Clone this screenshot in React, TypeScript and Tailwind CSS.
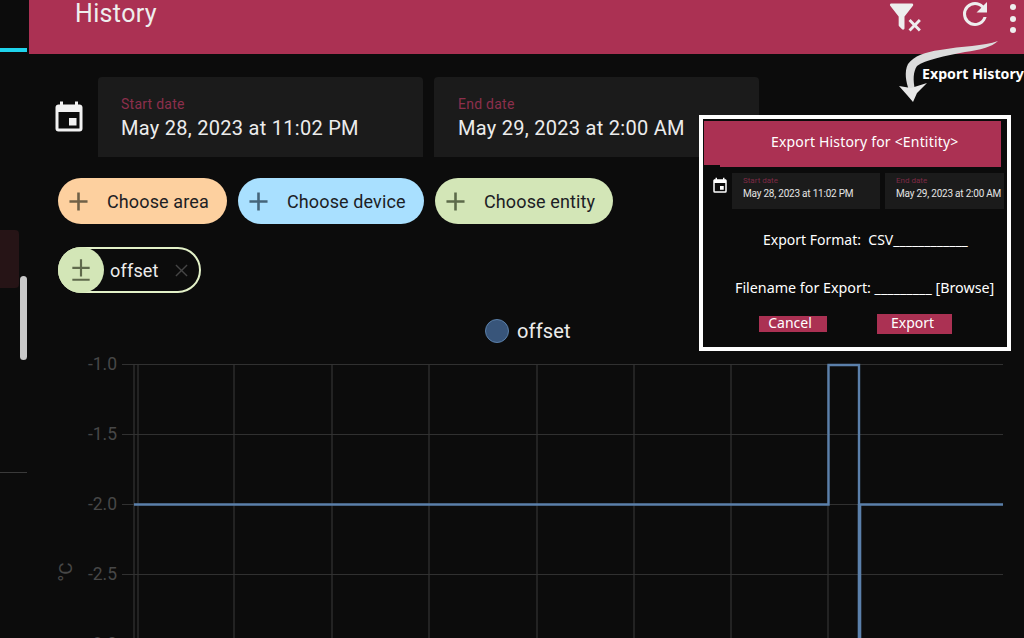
const CALENDAR = "M19,19H5V8H19M16,1V3H8V1H6V3H5C3.89,3 3,3.89 3,5V19A2,2 0 0,0 5,21H19A2,2 0 0,0 21,19V5C21,3.89 20.1,3 19,3H18V1M17,12H12V17H17V12Z";
const PLUS = "M19,13H13V19H11V13H5V11H11V5H13V11H19V13Z";
const FILTER_REMOVE =
  "M14.76,20.83L17.6,18L14.76,15.17L16.17,13.76L19,16.57L21.83,13.76L23.24,15.17L20.43,18L23.24,20.83L21.83,22.24L19,19.4L16.17,22.24L14.76,20.83M12,12V19.88C12.04,20.18 11.94,20.5 11.71,20.71C11.32,21.1 10.69,21.1 10.3,20.71L8.29,18.7C8.06,18.47 7.96,18.16 8,17.87V12H7.97L2.21,4.62C1.87,4.19 1.95,3.56 2.38,3.22C2.57,3.08 2.78,3 3,3V3H17V3C17.22,3 17.43,3.08 17.62,3.22C18.05,3.56 18.13,4.19 17.79,4.62L12.03,12H12Z";
const REFRESH =
  "M17.65,6.35C16.2,4.9 14.21,4 12,4A8,8 0 0,0 4,12A8,8 0 0,0 12,20C15.73,20 18.84,17.45 19.73,14H17.65C16.83,16.33 14.61,18 12,18A6,6 0 0,1 6,12A6,6 0 0,1 12,6C13.66,6 15.14,6.69 16.22,7.78L13,11H20V4L17.65,6.35Z";

function Icon({ d, className }: { d: string; className: string }) {
  return (
    <svg viewBox="0 0 24 24" fill="currentColor" className={className}>
      <path d={d} />
    </svg>
  );
}

function DateField({ label, value, className }: { label: string; value: string; className: string }) {
  return (
    <div className={`h-[80px] rounded-t bg-[#1b1b1b] pt-[18px] ${className}`}>
      <div className="text-[14px] leading-[18px] tracking-[0.25px] text-[#8c2f4c]">{label}</div>
      <div className="text-[20px] leading-[30px] tracking-[0.28px] text-[#ececec]">{value}</div>
    </div>
  );
}

function AddChip({ label, className, bg, plus }: { label: string; className: string; bg: string; plus: string }) {
  return (
    <div className={`flex h-[46px] items-center rounded-full pl-[5px] ${className} ${bg}`}>
      <Icon d={PLUS} className={`h-[31px] w-[31px] ${plus}`} />
      <span className="ml-[13px] text-[18px] tracking-[0.12px] text-[#1c2024]">{label}</span>
    </div>
  );
}

function MiniField({ label, value, className }: { label: string; value: string; className: string }) {
  return (
    <div className={`h-[36px] bg-[#1b1b1b] pt-[3px] ${className}`}>
      <div className="text-[8px] leading-[10px] text-[#7e2a45]">{label}</div>
      <div className="mt-[1px] text-[10px] leading-[13px] tracking-[-0.22px] text-[#e4e4e4]">{value}</div>
    </div>
  );
}

function Chart() {
  const rows = [
    { y: 364.5, label: "-1.0" },
    { y: 434.5, label: "-1.5" },
    { y: 504.5, label: "-2.0" },
    { y: 574.5, label: "-2.5" },
    { y: 644.5, label: "-3.0" },
  ];
  const cols = [134, 138, 234, 332, 429, 537, 634, 731, 828];
  return (
    <svg viewBox="29 350 995 288" className="mt-[7px] block h-[288px] w-[995px]">
      {rows.map((r) => (
        <g key={r.y}>
          <line x1="122" x2="1003" y1={r.y} y2={r.y} stroke="#313131" strokeWidth="1.2" />
          <text x="117" y={r.y + 5.5} textAnchor="end" fill="#474747" fontSize="17.5" fontFamily="Roboto, sans-serif">
            {r.label}
          </text>
        </g>
      ))}
      {cols.map((x) => (
        <line key={x} x1={x} x2={x} y1="364" y2="638" stroke="#343434" strokeWidth="1.2" />
      ))}
      <text
        x="67"
        y="572"
        textAnchor="middle"
        fill="#474747"
        fontSize="19"
        fontFamily="Roboto, sans-serif"
        transform="rotate(-90 67 572)"
        dominantBaseline="middle"
      >
        °C
      </text>
      <path d="M134 504.5H828.5V365H859V504.5M860 504.5H1003" fill="none" stroke="#5b80ab" strokeWidth="2.4" />
      <path d="M859.5 504V638" fill="none" stroke="#5b80ab" strokeWidth="3.6" />
    </svg>
  );
}

function ExportDialog() {
  return (
    <div className="absolute left-[699px] top-[115px] h-[236px] w-[312px] border-[4px] border-white bg-[#0b0b0b] font-['Noto_Sans',sans-serif] text-white">
      <div className="relative ml-[1px] mt-[2px] h-[46px] w-[297px] bg-[#ab3153] pl-[67px] pt-[11px] text-[14px] leading-[20px]">
        <span className="tracking-[0.18px]">Export History for &lt;Entitity&gt;</span>
        <div className="absolute bottom-0 left-0 h-[2px] w-[16px] bg-[#0b0b0b]" />
      </div>
      <div className="mt-[6px] flex items-start font-['Roboto',sans-serif]">
        <Icon d={CALENDAR} className="ml-[8px] mt-[4px] h-[18px] w-[18px] text-white" />
        <MiniField label="Start date" value="May 28, 2023 at 11:02 PM" className="ml-[3px] w-[148px] pl-[11px]" />
        <MiniField label="End date" value="May 29, 2023 at 2:00 AM" className="ml-[5px] w-[119px] pl-[11px]" />
      </div>
      <div className="mt-[21px] whitespace-nowrap pl-[60px] text-[14px] leading-[20px]">
        Export Format:&nbsp; CSV____________
      </div>
      <div className="mt-[28px] whitespace-nowrap pl-[32px] text-[14.3px] leading-[20px]">
        Filename for Export: _________ [Browse]
      </div>
      <div className="mt-[16px] flex items-center text-[14px]">
        <button className="ml-[56px] flex h-[16px] w-[68px] items-center justify-center bg-[#ab3153] pb-[4px] pr-[6px]">Cancel</button>
        <button className="ml-[50px] flex h-[20px] w-[75px] items-center justify-center bg-[#ab3153] pb-[3px] pr-[4px]">Export</button>
      </div>
    </div>
  );
}

export default function App() {
  return (
    <div className="relative flex h-[638px] w-[1024px] overflow-hidden bg-[#0c0c0c] font-['Roboto',sans-serif]">
      <aside className="relative flex w-[29px] shrink-0 flex-col">
        <div className="mt-[48px] h-[4px] w-[27px] bg-[#1fd4ec]" />
        <div className="mt-[178px] h-[58px] w-[19px] rounded-r-sm bg-[#261416]" />
        <div className="mt-[184px] h-px w-[27px] bg-[#3a3a3a]" />
        <div className="absolute left-[20px] top-[276px] h-[84px] w-[7px] rounded-full bg-[#c9c9c9]" />
      </aside>

      <main className="flex w-[995px] flex-col">
        <header className="flex h-[54px] shrink-0 items-start bg-[#ab3153] text-[#eeeeee]">
          <h1 className="ml-[46px] mt-[1px] text-[25px] leading-[26px] tracking-[0.35px] font-normal">History</h1>
          <Icon d={FILTER_REMOVE} className="ml-auto mt-[-1px] h-[35px] w-[35px]" />
          <Icon d={REFRESH} className="ml-[35px] mt-[-4px] h-[36px] w-[36px]" />
          <div className="ml-[17px] mr-[8px] mt-[4px] flex flex-col gap-[5.5px]">
            <span className="h-[6px] w-[6px] rounded-full bg-[#eeeeee]" />
            <span className="h-[6px] w-[6px] rounded-full bg-[#eeeeee]" />
            <span className="h-[6px] w-[6px] rounded-full bg-[#eeeeee]" />
          </div>
        </header>

        <div className="mt-[23px] flex items-start pl-[22px]">
          <Icon d={CALENDAR} className="mt-[23px] h-[36px] w-[36px] text-[#f2f2f2]" />
          <DateField label="Start date" value="May 28, 2023 at 11:02 PM" className="ml-[11px] w-[325px] pl-[23px]" />
          <DateField label="End date" value="May 29, 2023 at 2:00 AM" className="ml-[11px] w-[325px] pl-[24px]" />
        </div>

        <div className="ml-[29px] mt-[21px] flex gap-[11px]">
          <AddChip label="Choose area" className="w-[169px]" bg="bg-[#fdd09f]" plus="text-[#6f6047]" />
          <AddChip label="Choose device" className="w-[186px]" bg="bg-[#a9e0ff]" plus="text-[#45647a]" />
          <AddChip label="Choose entity" className="w-[178px]" bg="bg-[#d3e6b7]" plus="text-[#5c6a4a]" />
        </div>

        <div className="ml-[29px] mt-[23px] flex h-[46px] w-[143px] items-center rounded-full border-[2px] border-[#e3f1c8]">
          <div className="ml-[-2px] flex h-[46px] w-[46px] items-center justify-center rounded-full bg-[#d3e6b7] text-[#5f6a4c]">
            <svg viewBox="0 0 24 24" fill="currentColor" className="h-[26px] w-[26px]">
              <path d="M11 2h2v7h7v2h-7v7h-2v-7H4V9h7V2zM4 20h16v2H4z" />
            </svg>
          </div>
          <span className="ml-[6px] text-[18px] tracking-[0.2px] text-[#ececec]">offset</span>
          <svg viewBox="0 0 14 14" className="ml-[16px] h-[13px] w-[13px]" stroke="#454545" strokeWidth="1.5">
            <path d="M1 1l12 12M13 1L1 13" />
          </svg>
        </div>

        <div className="ml-[456px] mt-[26px] flex h-[24px] items-center">
          <span className="h-[24px] w-[24px] rounded-full border-[1.5px] border-[#5a7fa8] bg-[#38557a]" />
          <span className="ml-[8px] text-[20px] tracking-[0.15px] text-[#ececec]">offset</span>
        </div>

        <Chart />
      </main>

      <svg viewBox="0 0 1024 638" className="pointer-events-none absolute left-0 top-0 h-[638px] w-[1024px]">
        <path
          d="M998 41C984 46 962 46 940 50C925 52 914 56 908 64C904 72 906 82 909 90L915 90C913 80 913 72 917 66C925 60 945 56 965 52C980 50 992 47 998 41Z"
          fill="#dcdcdc"
        />
        <path d="M899 86L911 88L927 83L917 93L913 102L907 95Z" fill="#e8e8e8" />
      </svg>
      <div className="absolute left-[922px] top-[65px] whitespace-nowrap font-['Noto_Sans',sans-serif] text-[14.2px] leading-[18px] font-bold text-white">
        Export History
      </div>

      <ExportDialog />
    </div>
  );
}
